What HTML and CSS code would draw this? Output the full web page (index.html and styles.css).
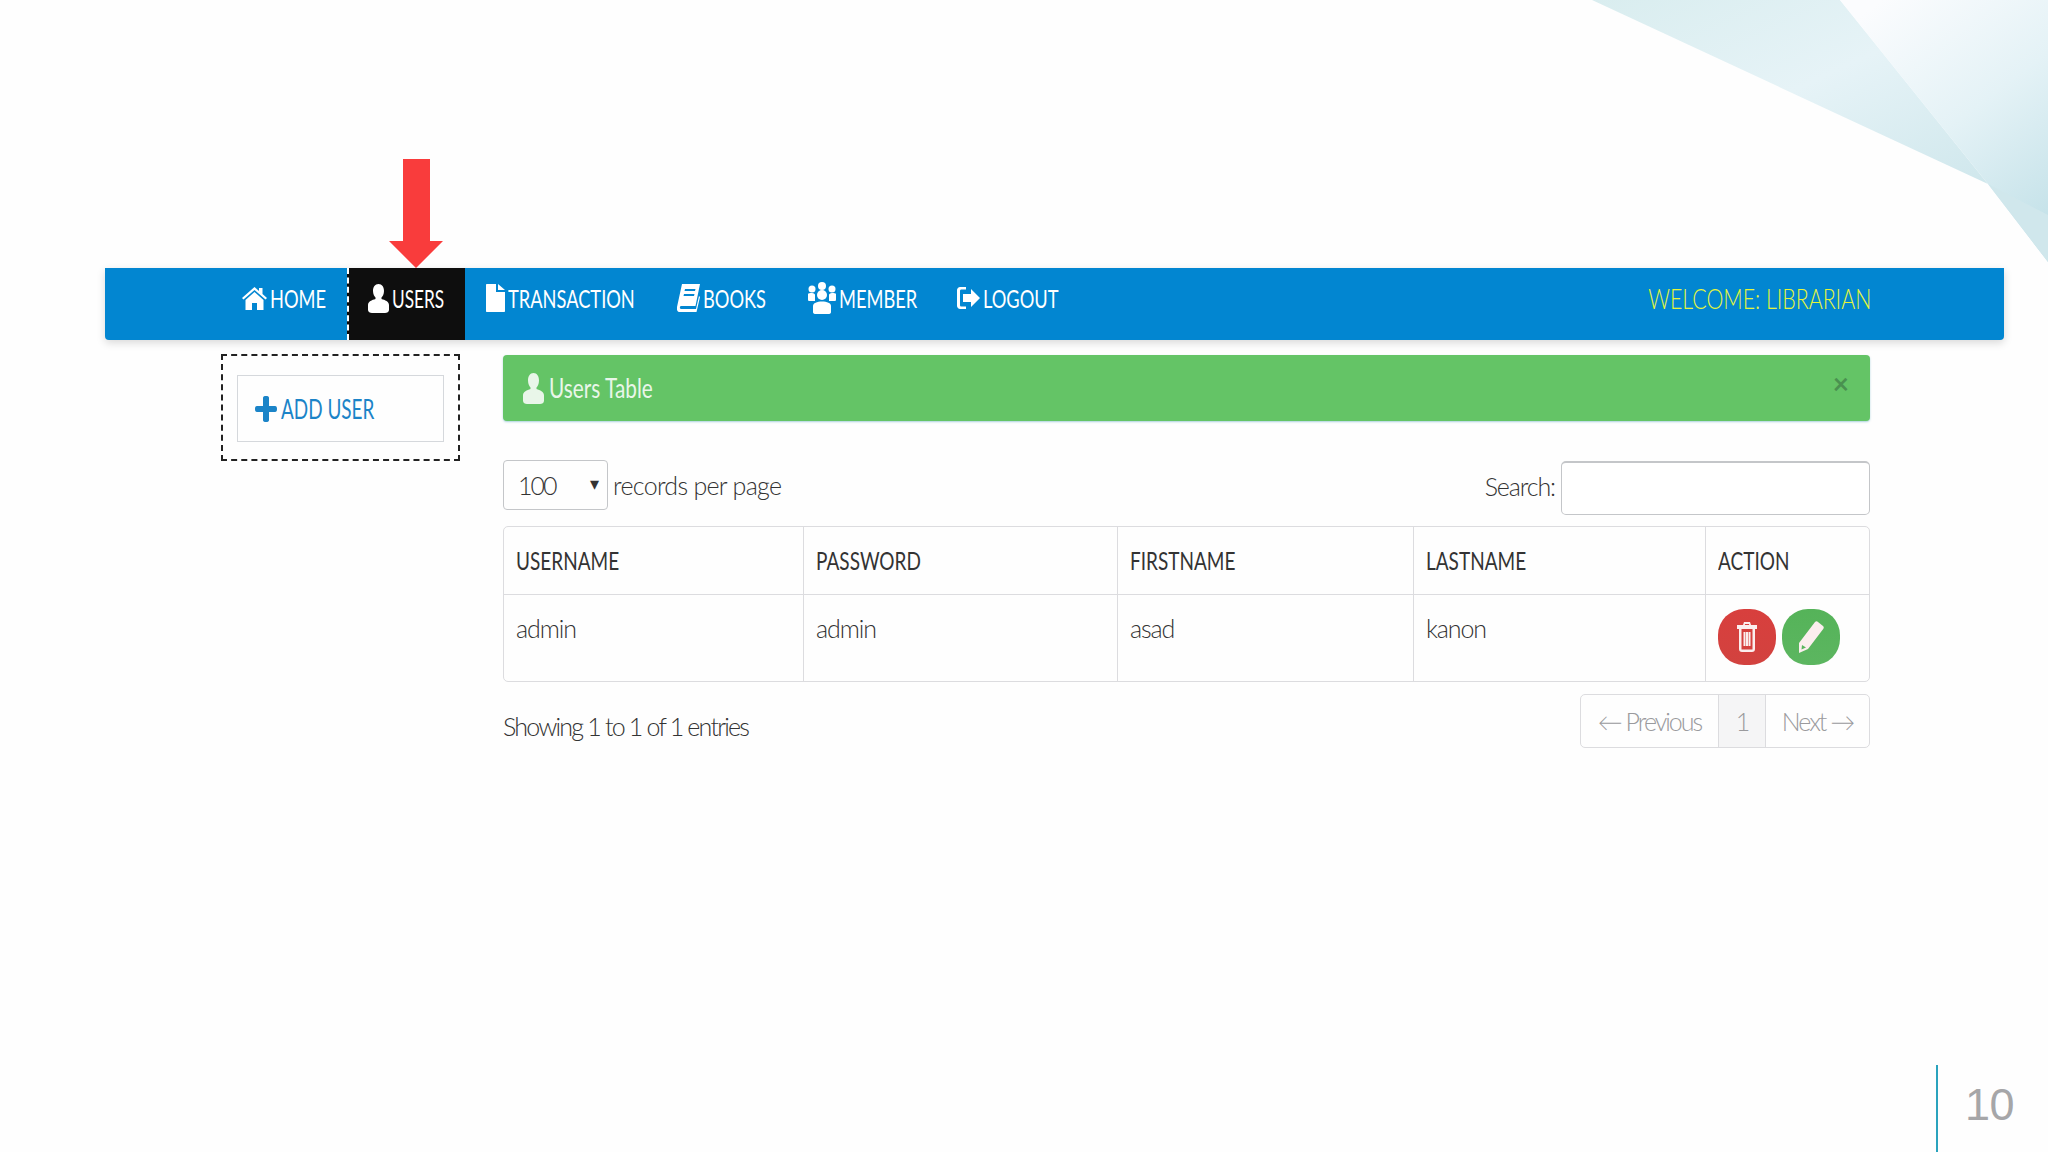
FILE: index.html
```html
<!DOCTYPE html>
<html lang="en">
<head>
    <meta charset="UTF-8">
    <title>Users</title>
    <link rel="stylesheet" href="styles.css">
</head>
<body>
    <svg class="corner" width="460" height="270" viewBox="0 0 460 270">
        <defs>
            <linearGradient id="foldA" x1="0" y1="0" x2="1" y2="1">
                <stop offset="0" stop-color="#d9edef"/>
                <stop offset="0.5" stop-color="#e6f3f7"/>
                <stop offset="1" stop-color="#cfe7ec"/>
            </linearGradient>
            <linearGradient id="foldB" x1="0.2" y1="0" x2="0.8" y2="1">
                <stop offset="0" stop-color="#fbfcfe"/>
                <stop offset="0.5" stop-color="#e4f2f6"/>
                <stop offset="1" stop-color="#c3e1e8"/>
            </linearGradient>
        </defs>
        <polygon points="4,0 252,0 400,184" fill="url(#foldA)"/>
        <polygon points="252,0 460,0 460,262 400,184" fill="url(#foldB)"/>
        <polygon points="400,184 460,215 460,262" fill="#d0e7ec"/>
    </svg>

    <div class="arrow"></div>

    <nav class="navbar">
        <ul class="nav-links">
            <li class="nav-home"><a href="#">
                <svg class="icon" width="25" height="24" viewBox="0 0 25 24"><path d="M12.5 1 L17 5 V2 H20.5 V8 L25 12 L23.5 13.5 L12.5 4 L1.5 13.5 L0 12 Z M12.5 6 L21.5 14 V24 H15 V17 H10 V24 H3.5 V14 Z"/></svg>
                <span class="squeeze">HOME</span></a></li>
            <li class="nav-users active"><a href="#">
                <svg class="icon" width="21" height="29" viewBox="0 0 21 29"><path d="M10.5 0 C14 0 16 3 16 7 C16 10.500 14.500 12.500 13.500 13.500 V15 C17 16 21 17.500 21 21 V26 C21 28 19 29 17 29 H4 C2 29 0 28 0 26 V21 C0 17.500 4 16 7.500 15 V13.500 C6.500 12.500 5 10.500 5 7 C5 3 7 0 10.500 0 Z"/></svg>
                <span class="squeeze">USERS</span></a></li>
            <li class="nav-trans"><a href="#">
                <svg class="icon" width="19" height="28" viewBox="0 0 19 28"><path d="M0 1 C0 .4 .4 0 1 0 H10 V8 H19 V27 C19 27.600 18.600 28 18 28 H1 C.4 28 0 27.600 0 27 Z M12 0 L19 6 H12 Z"/></svg>
                <span class="squeeze">TRANSACTION</span></a></li>
            <li class="nav-books"><a href="#">
                <svg class="icon" width="23" height="28" viewBox="0 0 23 28"><path fill-rule="evenodd" d="M5 0 H23 L18.500 22 H4 C2.500 22 2.500 25 4 25 H19 L22 12 L23 13 L19.500 28 H3 C.5 28 -.5 26 0 23 Z M8 5 L7.500 7 H18 L18.500 5 Z M7 10 L6.500 12 H17 L17.500 10 Z"/></svg>
                <span class="squeeze">BOOKS</span></a></li>
            <li class="nav-member"><a href="#">
                <svg class="icon" width="28" height="32" viewBox="0 0 28 32"><circle cx="4" cy="7" r="3.500"/><circle cx="24" cy="7" r="3.500"/><circle cx="14" cy="4" r="4"/><path d="M0 12 C0 11 2 11 4 11 C6 11 7 12 7 13 V19 H1 C0 19 0 18 0 17 Z M21 13 C21 12 22 11 24 11 C26 11 28 11 28 12 V17 C28 18 28 19 27 19 H21 Z"/><circle cx="14" cy="13" r="5"/><path d="M5 24 C5 21 9 19.500 14 19.500 C19 19.500 23 21 23 24 V30 C23 31.500 22 32 20 32 H8 C6 32 5 31.500 5 30 Z"/></svg>
                <span class="squeeze">MEMBER</span></a></li>
            <li class="nav-logout"><a href="#">
                <svg class="icon" width="23" height="24" viewBox="0 0 23 24"><path d="M3 1 H9 V3.500 H4.500 C3.500 3.500 3 4 3 5 V19 C3 20 3.500 20.500 4.500 20.500 H9 V23 H3 C1.500 23 0 21.500 0 20 V4 C0 2.500 1.500 1 3 1 Z"/><path d="M14 3 L23 12 L14 21 V16 H6 V8 H14 Z"/></svg>
                <span class="squeeze">LOGOUT</span></a></li>
        </ul>
        <span class="welcome">WELCOME: LIBRARIAN</span>
    </nav>

    <div class="main">
        <aside class="sidebar">
            <a class="add-user" href="#">
                <svg class="icon" width="22" height="28" viewBox="0 0 22 28"><path d="M8 3 C8 1.500 9 1 11 1 C13 1 14 1.500 14 3 V11 H20 C21.500 11 22 12 22 14 C22 16 21.500 17 20 17 H14 V25 C14 26.500 13 27 11 27 C9 27 8 26.500 8 25 V17 H2 C.5 17 0 16 0 14 C0 12 .5 11 2 11 H8 Z"/></svg>
                <span class="squeeze add-text">ADD USER</span></a>
        </aside>

        <section class="content">
            <div class="alert">
                <span class="alert-title">
                    <svg class="icon" width="21" height="31" viewBox="0 0 21 29" preserveAspectRatio="none"><path d="M10.5 0 C14 0 16 3 16 7 C16 10.500 14.500 12.500 13.500 13.500 V15 C17 16 21 17.500 21 21 V26 C21 28 19 29 17 29 H4 C2 29 0 28 0 26 V21 C0 17.500 4 16 7.500 15 V13.500 C6.500 12.500 5 10.500 5 7 C5 3 7 0 10.500 0 Z"/></svg>
                    <span class="squeeze title-text">Users Table</span></span>
                <span class="alert-close">×</span>
            </div>

            <div class="table-top">
                <label class="per-page">
                    <span class="select-box"><span class="select-value">100</span><span class="caret">▾</span></span>
                    records per page
                </label>
                <label class="search"><span class="search-label">Search:</span> <input type="text"></label>
            </div>

            <table class="users">
                <thead>
                    <tr>
                        <th class="col-user"><span class="squeeze">USERNAME</span></th>
                        <th class="col-pass"><span class="squeeze">PASSWORD</span></th>
                        <th class="col-first"><span class="squeeze">FIRSTNAME</span></th>
                        <th class="col-last"><span class="squeeze">LASTNAME</span></th>
                        <th><span class="squeeze">ACTION</span></th>
                    </tr>
                </thead>
                <tbody>
                    <tr>
                        <td>admin</td>
                        <td>admin</td>
                        <td>asad</td>
                        <td>kanon</td>
                        <td class="actions">
                            <a class="round red" href="#">
                                <svg width="20" height="30" viewBox="0 0 20 30"><path fill-rule="evenodd" d="M7 0 H13 L14 3 H20 V7 H18 V27 C18 29 17 30 15 30 H5 C3 30 2 29 2 27 V7 H0 V3 H6 Z M8 2 L7.800 3 H12.200 L12 2 Z M4.500 7 V27.500 H15.500 V7 Z M6.500 10 H8.500 V24 H6.500 Z M9 10 H11 V24 H9 Z M11.500 10 H13.500 V24 H11.500 Z"/></svg>
                            </a>
                            <a class="round green" href="#">
                                <svg width="26" height="32" viewBox="0 0 26 32"><path fill-rule="evenodd" d="M17 1 C18 0 19 0 20 1 L25 5 C26 6 26 7 25.200 8 L10 28 L1 32 L1 22 Z M4 24 L3.500 28.500 L8 26.500 Z"/></svg>
                            </a>
                        </td>
                    </tr>
                </tbody>
            </table>

            <div class="table-bottom">
                <span class="info">Showing 1 to 1 of 1 entries</span>
                <div class="pager">
                    <a class="prev" href="#">← Previous</a>
                    <a class="current" href="#">1</a>
                    <a class="next" href="#">Next →</a>
                </div>
            </div>
        </section>
    </div>

    <div class="page-num">10</div>
</body>
</html>
```

FILE: styles.css
```css
html, body {
    margin: 0;
    height: 100%;
}

body {
    position: relative;
    overflow: hidden;
    padding-top: 268px;
    box-sizing: border-box;
    background-color: #fefefe;
    color: #333;
    font-family: Lato, sans-serif;
    font-weight: 300;
    font-size: 25px;
    letter-spacing: -1.1px;
}

a {
    color: inherit;
    text-decoration: none;
}

.icon {
    fill: currentColor;
    flex: none;
}

/* no narrow gothic font here, so the caps get squeezed sideways */
.squeeze {
    display: inline-block;
    transform: scaleX(0.76);
    transform-origin: 0 50%;
    letter-spacing: 0;
    white-space: nowrap;
}

.corner {
    position: absolute;
    top: 0;
    right: 0;
}

.arrow {
    position: absolute;
    left: 389px;
    top: 159px;
    width: 54px;
    height: 109px;
    background-color: #f93c3c;
    clip-path: polygon(14px 0, 41px 0, 41px 82px, 54px 82px, 27px 109px, 0 82px, 14px 82px);
}

.navbar {
    display: flex;
    justify-content: space-between;
    align-items: flex-start;
    width: 1899px;
    height: 72px;
    margin-left: 105px;
    padding-right: 133px;
    box-sizing: border-box;
    background-color: #0286d1;
    border-radius: 0 0 4px 4px;
    box-shadow: 0 3px 8px rgba(0, 0, 0, 0.15);
    color: #fff;
}

.nav-links {
    display: flex;
    list-style: none;
    margin: 0;
    padding: 0 0 0 116px;
    font-weight: 400;
}

.nav-links a {
    display: flex;
    align-items: center;
    gap: 3px;
    height: 72px;
    padding: 0 0 12px 21px;
    box-sizing: border-box;
}

.nav-links .squeeze {
    transform: scaleX(0.73);
}

.nav-home {
    width: 126px;
}

.nav-users {
    width: 118px;
}

.nav-trans {
    width: 191px;
}

.nav-books {
    width: 131px;
}

.nav-member {
    width: 149px;
}

.nav-logout {
    width: 160px;
}

.nav-links .active a {
    padding-left: 19px;
    background-color: #0e0e0e;
    border-left: 2px dashed #fff;
}

.nav-links .nav-users .squeeze {
    transform: scaleX(0.69);
}

.welcome {
    margin-top: 14px;
    color: #e4f53c;
    font-size: 27px;
    font-weight: 300;
    letter-spacing: 0;
    white-space: nowrap;
    transform: scaleX(0.79);
    transform-origin: 100% 50%;
}

.main {
    display: flex;
    align-items: flex-start;
    gap: 43px;
    margin: 14px 0 0 221px;
}

.sidebar {
    width: 239px;
    height: 107px;
    padding: 19px 14px 17px;
    box-sizing: border-box;
    border: 2px dashed #222;
}

.add-user {
    display: flex;
    align-items: center;
    gap: 4px;
    height: 100%;
    padding-left: 17px;
    box-sizing: border-box;
    border: 1px solid #d5d8dc;
    color: #1b84c8;
    font-size: 27px;
    font-weight: 400;
}

.add-text {
    transform: scaleX(0.7);
}

.content {
    width: 1367px;
}

.alert {
    display: flex;
    justify-content: space-between;
    height: 66px;
    margin-top: 1px;
    padding: 0 22px 0 20px;
    box-sizing: border-box;
    background-color: #64c466;
    border-radius: 4px;
    box-shadow: 0 1px 2px rgba(90, 170, 190, 0.5);
    color: #e9f6e9;
}

.alert-title {
    display: flex;
    align-items: center;
    gap: 5px;
    font-size: 26px;
    font-weight: 400;
}

.title-text {
    transform: scaleX(0.8);
}

.alert-close {
    margin-top: 11px;
    color: #4a9150;
    font-size: 28px;
    font-weight: 700;
}

.table-top {
    display: flex;
    justify-content: space-between;
    align-items: center;
    margin-top: 39px;
}

.per-page {
    display: flex;
    align-items: center;
    gap: 5px;
    margin-bottom: 5px;
    letter-spacing: -0.7px;
}

.select-box {
    display: flex;
    justify-content: space-between;
    align-items: center;
    width: 105px;
    height: 50px;
    padding: 0 9px 0 14px;
    box-sizing: border-box;
    border: 1px solid #c4c6c9;
    border-radius: 4px;
}

.select-value {
    letter-spacing: -2px;
}

.caret {
    margin-bottom: 4px;
    font-size: 18px;
}

.search {
    display: flex;
    align-items: center;
    gap: 6px;
}

.search-label {
    margin-bottom: 3px;
}

.search input {
    width: 309px;
    height: 54px;
    padding: 0;
    box-sizing: border-box;
    background-color: #fff;
    border: 1px solid #c4c6c9;
    border-top-width: 2px;
    border-radius: 5px;
}

.users {
    width: 100%;
    margin-top: 11px;
    border-collapse: separate;
    border-spacing: 0;
    table-layout: fixed;
    border: 1px solid #dcdcdf;
    border-radius: 5px;
}

.users th, .users td {
    padding: 0 11px 0 12px;
    text-align: left;
    vertical-align: top;
    border-left: 1px solid #dcdcdf;
}

.users th:first-child, .users td:first-child {
    border-left: none;
}

.users th {
    height: 67px;
    line-height: 66px;
    border-bottom: 1px solid #dcdcdf;
    font-weight: 400;
}

.users td {
    height: 86px;
    padding-top: 11px;
    box-sizing: border-box;
    line-height: 44px;
}

.col-user {
    width: 276px;
}

.col-pass {
    width: 290px;
}

.col-first {
    width: 272px;
}

.col-last {
    width: 268px;
}

.users .actions {
    display: flex;
    gap: 6px;
    padding-top: 14px;
}

.round {
    display: flex;
    justify-content: center;
    align-items: center;
    width: 58px;
    height: 56px;
    border-radius: 26px;
    fill: #fbeeee;
}

.red {
    background: linear-gradient(#d83f3d, #d2423f);
}

.green {
    background: linear-gradient(#55b359, #5cb660);
}

.table-bottom {
    display: flex;
    justify-content: space-between;
    align-items: flex-start;
    margin-top: 12px;
}

.info {
    margin-top: 17px;
    letter-spacing: -1.8px;
}

.pager {
    display: flex;
    height: 54px;
    box-sizing: border-box;
    border: 1px solid #dcdcdf;
    border-radius: 5px;
    color: #9a9a9d;
    letter-spacing: -2px;
}

.pager a {
    display: flex;
    justify-content: center;
    align-items: center;
    border-left: 1px solid #dcdcdf;
}

.pager .prev {
    width: 137px;
    border-left: none;
}

.pager .current {
    width: 46px;
    background-color: #f5f5f6;
}

.pager .next {
    width: 103px;
}

.page-num {
    position: absolute;
    right: 0;
    bottom: 0;
    width: 112px;
    height: 87px;
    padding: 14px 0 0 27px;
    box-sizing: border-box;
    border-left: 2px solid #2aa3bd;
    color: #a6a6a8;
    font-family: "Liberation Sans", sans-serif;
    font-weight: 400;
    font-size: 45px;
    letter-spacing: -0.6px;
}
```
